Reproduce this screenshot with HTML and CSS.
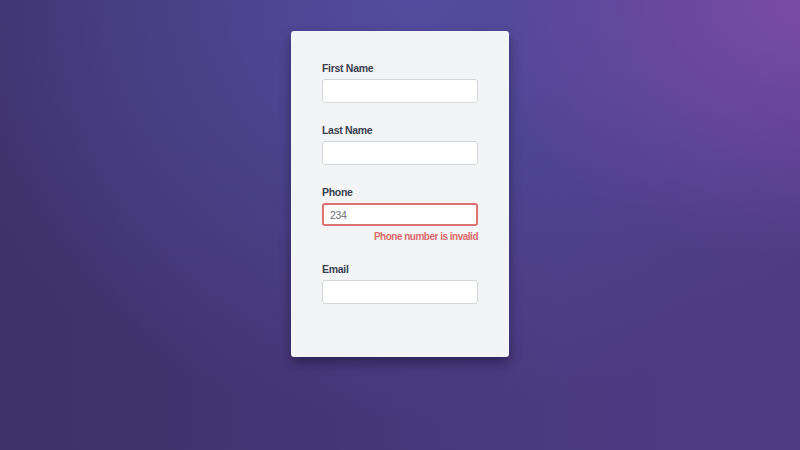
FILE: index.html
```html
<!DOCTYPE html>
<html lang="en">
<head>
    <meta charset="UTF-8">
    <meta name="viewport" content="width=device-width, initial-scale=1.0">
    <title>Contact Form</title>
    <link rel="stylesheet" href="styles.css">
</head>
<body>
    <form class="card" novalidate>
        <div class="field">
            <label for="first-name">First Name</label>
            <input type="text" id="first-name">
        </div>

        <div class="field">
            <label for="last-name">Last Name</label>
            <input type="text" id="last-name">
        </div>

        <div class="field has-error">
            <label for="phone">Phone</label>
            <input type="tel" id="phone" value="234">
            <div class="error">Phone number is invalid</div>
        </div>

        <div class="field">
            <label for="email">Email</label>
            <input type="email" id="email">
        </div>
    </form>
</body>
</html>
```

FILE: styles.css
```css
html, body {
    height: 100%;
}

body {
    margin: 0;
    display: flex;
    justify-content: center;
    align-items: flex-start;
    font-family: "Liberation Sans", Arial, sans-serif;
    background-color: #3c3168;
    background-image:
        radial-gradient(ellipse 320px 260px at 100% 0%, rgba(130, 78, 170, 0.85), rgba(130, 78, 170, 0) 100%),
        radial-gradient(ellipse 520px 420px at 52% 0%, rgba(85, 78, 162, 0.9), rgba(85, 78, 162, 0) 100%),
        linear-gradient(to right, #3c3168, #4a3a80 70%, #4e3a84);
}

.card {
    width: 156px;
    margin-top: 31px;
    padding: 29px 31px 34px;
    background: #f3f4f6;
    border-radius: 3px;
    box-shadow: 0 6px 12px rgba(20, 10, 40, 0.45);
}

.field {
    margin-bottom: 19px;
}

label {
    display: block;
    font-size: 10.5px;
    font-weight: bold;
    letter-spacing: -0.3px;
    line-height: 16px;
    color: #3b4150;
    margin-bottom: 3px;
}

input {
    display: block;
    box-sizing: border-box;
    width: 100%;
    height: 24px;
    padding: 0 7px;
    border: 1px solid #d4d6db;
    border-radius: 3px;
    background: #fff;
    font-family: inherit;
    font-size: 10.5px;
    letter-spacing: -0.4px;
    color: #6b6f78;
    outline: none;
}

.has-error input {
    border: 2px solid #dc7272;
    padding: 0 6px;
    margin-top: 1px;
    height: 23px;
}

.error {
    margin-top: 4px;
    text-align: right;
    font-size: 10px;
    font-weight: bold;
    letter-spacing: -0.5px;
    line-height: 13px;
    color: #dc6a6a;
}

.has-error {
    margin-bottom: 18px;
}
```
